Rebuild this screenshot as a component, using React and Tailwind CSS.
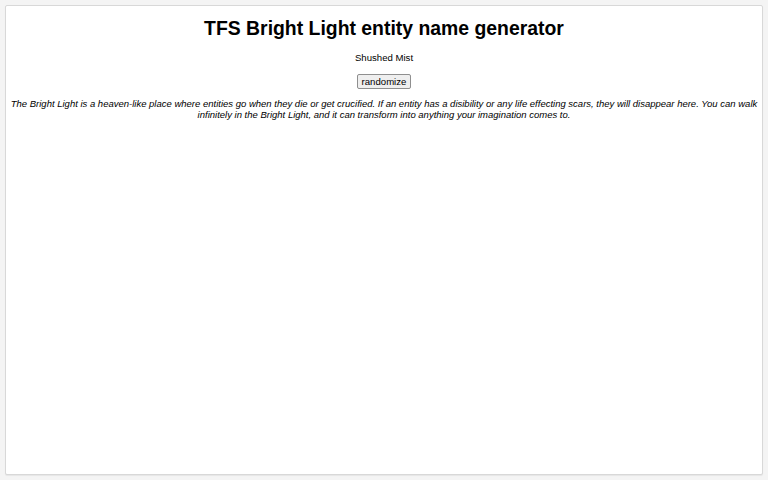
import React, { useState } from 'react';

const NAMES = ['Shushed Mist', 'Quiet Ember', 'Pale Halo', 'Soft Glimmer', 'Gentle Dawn'];

const App = () => {
  const [name, setName] = useState(NAMES[0]);

  const randomize = () => {
    setName(NAMES[Math.floor(Math.random() * NAMES.length)]);
  };

  return (
    <div className="min-h-screen bg-[#f4f4f4] p-[5px] font-['Liberation_Sans',Arial,sans-serif] text-black">
      <div className="h-[470px] rounded-[2px] border border-[#d8d8d8] bg-white px-[1px] text-center shadow-[0_1px_1px_rgba(0,0,0,0.06)]">
        <h1 className="pt-[10px] text-[19.4px] font-bold leading-[24px]">TFS Bright Light entity name generator</h1>
        <p className="mt-[12px] text-[9.6px] leading-[12px]">{name}</p>
        <div className="mt-[4px]">
          <button
            type="button"
            onClick={randomize}
            className="rounded-[2px] border border-[#8f8f8f] bg-[#efefef] px-[4px] text-[9.6px] leading-[13px]"
          >
            randomize
          </button>
        </div>
        <p className="mt-[6px] text-[9.5px] italic leading-[11px]">
          The Bright Light is a heaven-like place where entities go when they die or get crucified. If an entity has a disibility or any life effecting scars, they will disappear here. You can walk infinitely in the Bright Light, and it can transform into anything your imagination comes to.
        </p>
      </div>
    </div>
  );
};

export default App;
